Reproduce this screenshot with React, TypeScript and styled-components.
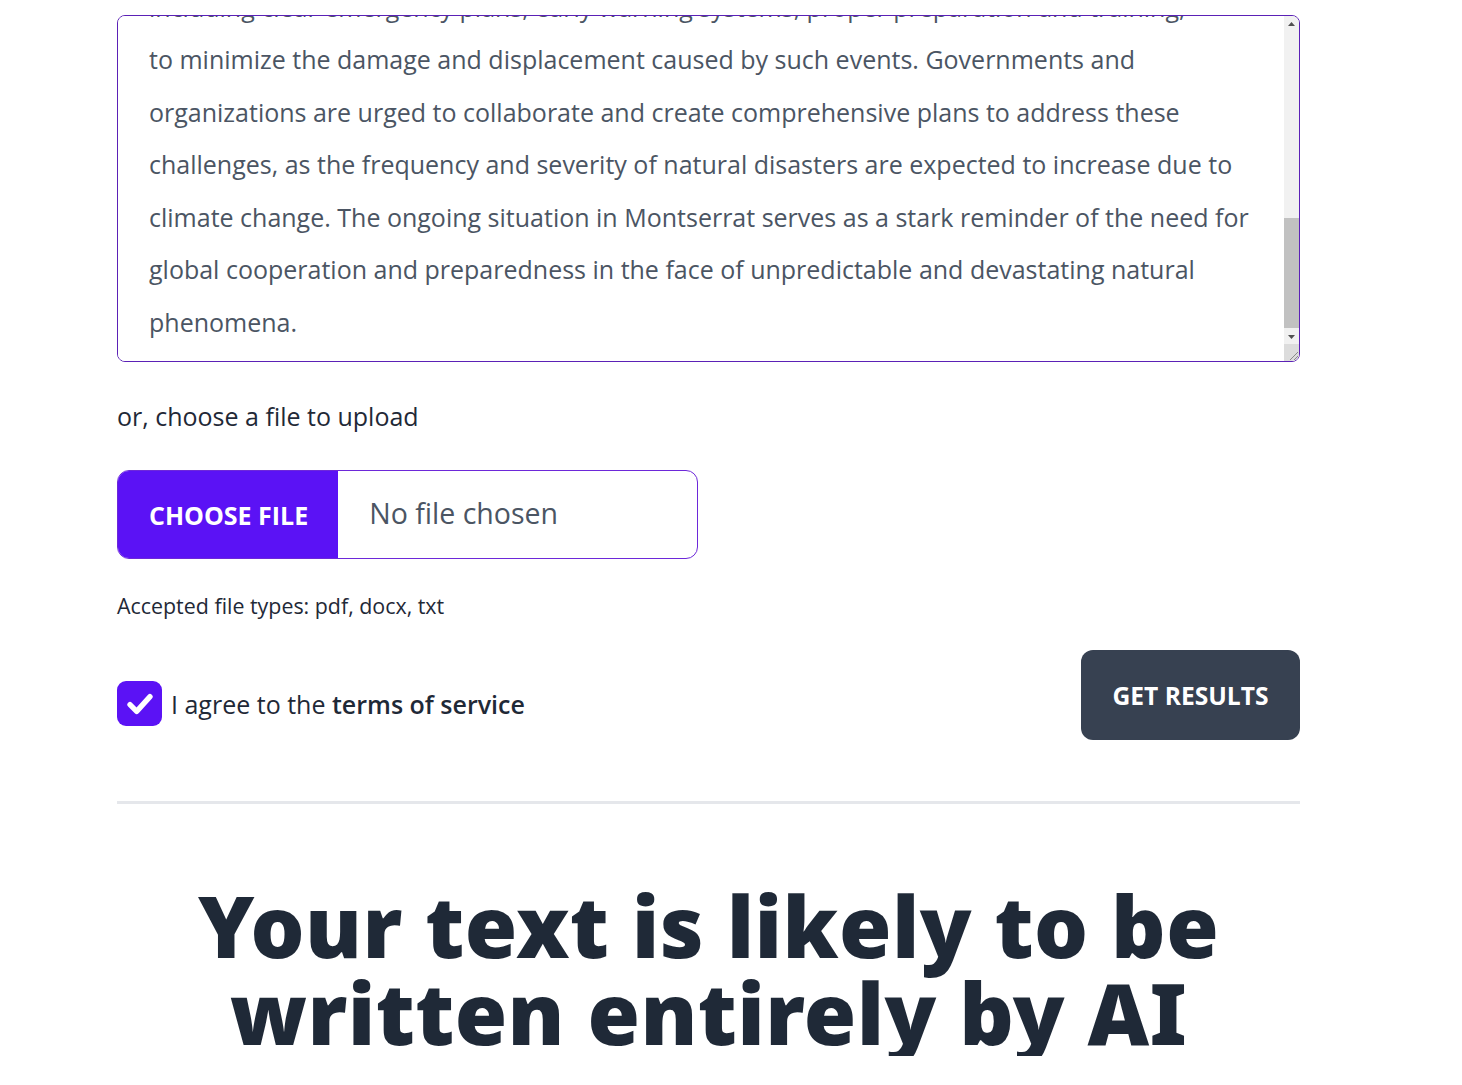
import * as React from 'react';
import styled, { createGlobalStyle } from 'styled-components';

const GlobalStyle = createGlobalStyle`
  html, body {
    margin: 0;
    padding: 0;
    background: #ffffff;
    font-family: 'Open Sans', 'Noto Sans', Arial, sans-serif;
    color: #1f2937;
  }
`;

const Page = styled.div`
  width: 1183px;
  margin: 0 0 0 117px;
  padding-top: 15px;
  display: flex;
  flex-direction: column;
`;

const EditorFrame = styled.div`
  box-sizing: border-box;
  height: 347px;
  border: 1px solid #5b21b6;
  border-radius: 8px;
  overflow: hidden;
  display: flex;
`;

const TextBox = styled.textarea`
  flex: 1;
  box-sizing: border-box;
  height: 100%;
  padding: 16px 1px 13px 31px;
  border: none;
  font-family: inherit;
  font-size: 25px;
  line-height: 52.5px;
  color: #4b5563;
  resize: none;
  outline: none;
  display: block;
  scrollbar-width: none;

  &::-webkit-scrollbar {
    display: none;
  }
`;

const ScrollBar = styled.div`
  width: 15px;
  background: #f1f1f1;
  display: flex;
  flex-direction: column;
`;

const ScrollArrow = styled.div`
  height: 15px;
  display: flex;
  align-items: center;
  justify-content: center;
`;

const ScrollTrack = styled.div`
  flex: 1;
  display: flex;
  flex-direction: column;
  justify-content: flex-end;
  padding-bottom: 1px;
`;

const ScrollThumb = styled.div`
  height: 110px;
  background: #c1c1c1;
`;

const ResizeCorner = styled.div`
  height: 17px;
  background: #dcdcdc;
  display: flex;
  align-items: flex-end;
  justify-content: flex-end;
`;

const UploadLabel = styled.p`
  margin: 38px 0 0;
  font-size: 25px;
  line-height: 32px;
  color: #1f2937;
`;

const FileField = styled.label`
  margin-top: 38px;
  width: 581px;
  height: 89px;
  box-sizing: border-box;
  border: 1px solid #6d28d9;
  border-radius: 12px;
  overflow: hidden;
  display: flex;
  align-items: stretch;
  cursor: pointer;

  input {
    display: none;
  }
`;

const FileButton = styled.span`
  background: #5b12f5;
  color: #ffffff;
  font-weight: 700;
  font-size: 25px;
  text-transform: uppercase;
  padding: 0 30px 0 31px;
  display: flex;
  align-items: center;
`;

const FileName = styled.span`
  padding-left: 31px;
  font-size: 28.5px;
  color: #4b5563;
  display: flex;
  align-items: center;
  margin-top: -3px;
`;

const Hint = styled.p`
  margin: 33px 0 0;
  font-size: 21.4px;
  line-height: 28px;
  color: #1f2937;
`;

const ActionRow = styled.div`
  margin-top: 30px;
  display: flex;
  justify-content: space-between;
  align-items: center;
`;

const Agree = styled.label`
  display: flex;
  align-items: center;
  gap: 9px;
  font-size: 25px;
  color: #1f2937;
  margin-top: 17px;
  cursor: pointer;

  b {
    font-weight: 600;
  }
`;

const CheckBox = styled.span<{ $checked: boolean }>`
  width: 45px;
  height: 45px;
  border-radius: 9px;
  background: ${(p) => (p.$checked ? '#5b12f5' : '#ffffff')};
  border: ${(p) => (p.$checked ? 'none' : '2px solid #9ca3af')};
  display: flex;
  align-items: center;
  justify-content: center;
  box-sizing: border-box;
`;

const SubmitButton = styled.button`
  width: 219px;
  height: 90px;
  border: none;
  border-radius: 12px;
  background: #374151;
  color: #ffffff;
  font-family: inherit;
  font-weight: 700;
  font-size: 24.6px;
  text-transform: uppercase;
  cursor: pointer;
`;

const Divider = styled.hr`
  margin: 61px 0 0;
  border: none;
  border-top: 3px solid #e5e7eb;
`;

const ResultTitle = styled.h1`
  margin: 78px 0 0;
  text-align: center;
  font-family: 'Noto Sans', 'Open Sans', sans-serif;
  font-weight: 900;
  font-size: 85px;
  line-height: 87px;
  letter-spacing: 0.4px;
  color: #1f2937;
`;

const SAMPLE =
  'The volcanic activity on the island of Montserrat has once again raised concerns about the safety of its residents. ' +
  'The Soufrière Hills volcano, which has been active since 1995, has forced thousands of people to leave their homes, ' +
  'and large parts of the island, including the former capital Plymouth, remain inside an exclusion zone. ' +
  'Scientists at the local observatory continue to monitor the volcano closely, recording ground deformation, ' +
  'gas emissions and seismic signals in order to warn the population of any new eruption. ' +
  'Experts have stressed the importance of disaster preparedness and long-term strategies for resettlement and ' +
  'economic recovery, which are essential for any community living in the shadow of an active volcano, ' +
  'and they have called for better funding, stronger building codes and regular drills,\n' +
  'including clear emergency plans, early warning systems, proper preparation and training,\n' +
  'to minimize the damage and displacement caused by such events. Governments and organizations are urged to collaborate ' +
  'and create comprehensive plans to address these challenges, as the frequency and severity of natural disasters are ' +
  'expected to increase due to climate change. The ongoing situation in Montserrat serves as a stark reminder of the need ' +
  'for global cooperation and preparedness in the face of unpredictable and devastating natural phenomena.';

export default function App() {
  const ref = React.useRef<HTMLTextAreaElement>(null);
  const [agreed, setAgreed] = React.useState(true);

  React.useEffect(() => {
    if (ref.current) ref.current.scrollTop = ref.current.scrollHeight;
  }, []);

  return (
    <>
      <GlobalStyle />
      <Page>
        <EditorFrame>
          <TextBox ref={ref} defaultValue={SAMPLE} />
          <ScrollBar>
            <ScrollArrow>
              <svg width="7" height="4" viewBox="0 0 7 4">
                <path d="M3.5 0L7 4H0z" fill="#505050" />
              </svg>
            </ScrollArrow>
            <ScrollTrack>
              <ScrollThumb />
            </ScrollTrack>
            <ScrollArrow>
              <svg width="7" height="4" viewBox="0 0 7 4">
                <path d="M0 0H7L3.5 4z" fill="#505050" />
              </svg>
            </ScrollArrow>
            <ResizeCorner>
              <svg width="12" height="12" viewBox="0 0 12 12">
                <path d="M11 3L3 11M11 7L7 11" stroke="#8a8a8a" strokeWidth="1" />
              </svg>
            </ResizeCorner>
          </ScrollBar>
        </EditorFrame>
        <UploadLabel>or, choose a file to upload</UploadLabel>
        <FileField>
          <input type="file" accept=".pdf,.docx,.txt" />
          <FileButton>Choose file</FileButton>
          <FileName>No file chosen</FileName>
        </FileField>
        <Hint>Accepted file types: pdf, docx, txt</Hint>
        <ActionRow>
          <Agree onClick={() => setAgreed(!agreed)}>
            <CheckBox $checked={agreed}>
              {agreed && (
                <svg width="32" height="32" viewBox="0 0 24 24" fill="none">
                  <path d="M4.5 12.5l5 5 10-11" stroke="#fff" strokeWidth="4" strokeLinecap="round" strokeLinejoin="round" />
                </svg>
              )}
            </CheckBox>
            <span>
              I agree to the <b>terms of service</b>
            </span>
          </Agree>
          <SubmitButton>Get results</SubmitButton>
        </ActionRow>
        <Divider />
        <ResultTitle>
          Your text is likely to be
          <br />
          written entirely by AI
        </ResultTitle>
      </Page>
    </>
  );
}
